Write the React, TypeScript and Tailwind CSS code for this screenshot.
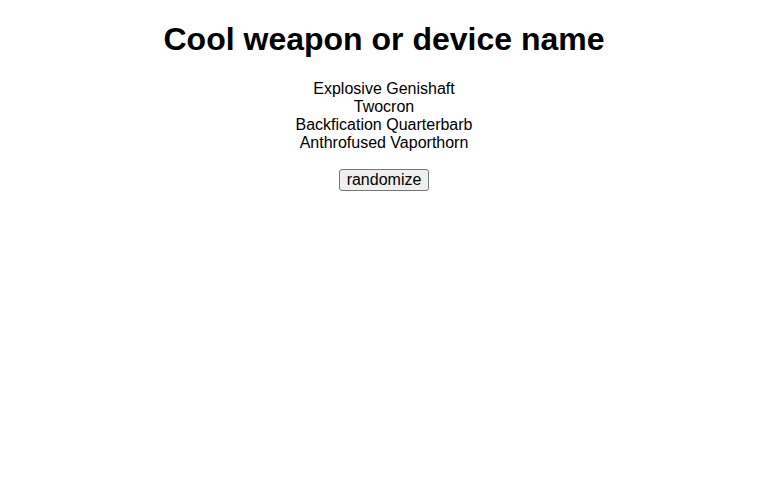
import { useState } from "react";

const prefixes = ["Explosive", "Backfication", "Anthrofused", "Hyper", "Quantum", "Void"];
const roots = ["Genishaft", "Twocron", "Quarterbarb", "Vaporthorn", "Blastlance", "Riftspike"];

const initial = [
  "Explosive Genishaft",
  "Twocron",
  "Backfication Quarterbarb",
  "Anthrofused Vaporthorn",
];

function pick<T>(list: T[]) {
  return list[Math.floor(Math.random() * list.length)];
}

function makeName() {
  return Math.random() < 0.3 ? pick(roots) : `${pick(prefixes)} ${pick(roots)}`;
}

export default function App() {
  const [names, setNames] = useState<string[]>(initial);

  return (
    <div className="min-h-screen bg-white text-black text-center font-['Liberation_Sans',Arial,sans-serif] text-base leading-[18px]">
      <h1 className="pt-[21px] pb-[22px] text-[32px] leading-[37px] font-bold">
        Cool weapon or device name
      </h1>
      <div className="flex flex-col">
        {names.map((n, i) => (
          <span key={i}>{n}</span>
        ))}
      </div>
      <div className="mt-[17px]">
        <button
          onClick={() => setNames([makeName(), makeName(), makeName(), makeName()])}
          className="rounded-[3px] border border-[#767676] bg-[#efefef] px-[7px] py-[1px] text-base leading-[18px] text-black hover:bg-[#e5e5e5]"
        >
          randomize
        </button>
      </div>
    </div>
  );
}
